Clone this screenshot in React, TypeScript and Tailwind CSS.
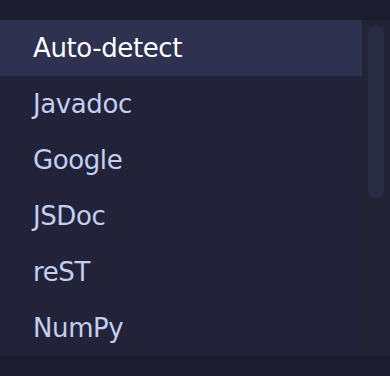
const styles = ["Auto-detect", "Javadoc", "Google", "JSDoc", "reST", "NumPy"];

export default function App() {
  const selected = 0;

  return (
    <div
      className="w-[390px] h-[376px] bg-[#1b1c2e] pt-5 pb-5 overflow-hidden"
      style={{ fontFamily: '"DejaVu Sans", sans-serif' }}
    >
      <div className="flex h-[336px] bg-[#222338]">
        <ul className="flex flex-col w-[362px]">
          {styles.map((name, i) => (
            <li
              key={name}
              className={
                i === selected
                  ? "h-14 flex items-center pl-[33px] bg-[#2e3150] text-white text-[26px] tracking-[-0.4px]"
                  : "h-14 flex items-center pl-[33px] text-[#c3cff2] text-[26px] tracking-[-0.4px]"
              }
            >
              {name}
            </li>
          ))}
        </ul>
        <div className="w-[28px] bg-[#232336] pt-[6px] flex justify-center">
          <div className="w-4 h-[172px] rounded-full bg-[#292b42]" />
        </div>
      </div>
    </div>
  );
}
